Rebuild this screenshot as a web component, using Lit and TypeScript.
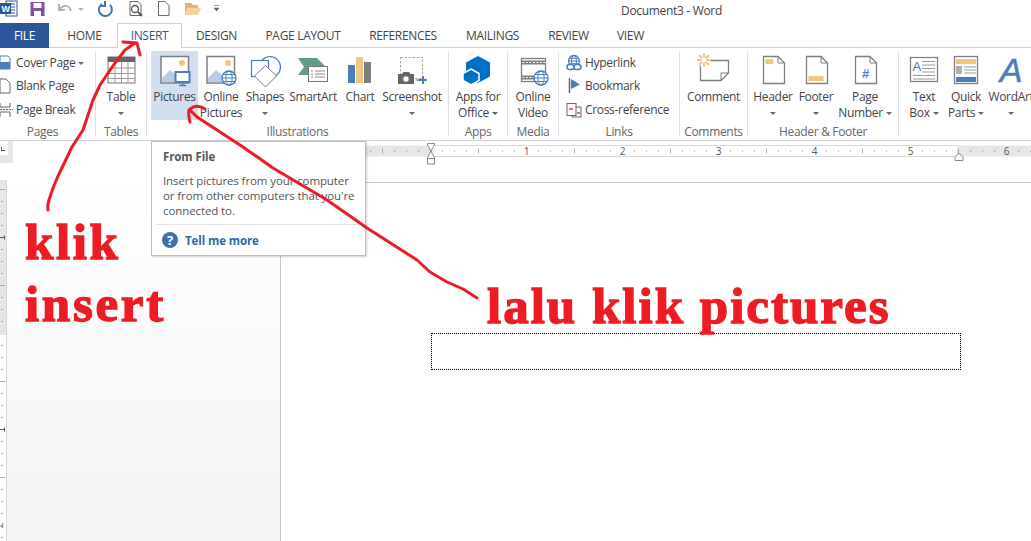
import { css, html, LitElement, svg } from "lit";
import { customElement } from "lit/decorators.js";

const BLUE = "#4a7ebb";
const YEL = "#edc87e";
const GR = "#7f7f7f";

const globe = (x: number, y: number, r: number) => svg`
  <circle cx=${x} cy=${y} r=${r} fill="#fff" stroke=${BLUE} stroke-width="1.3"/>
  <ellipse cx=${x} cy=${y} rx=${r * 0.45} ry=${r} fill="none" stroke=${BLUE}/>
  <path d="M${x - r} ${y}h${2 * r}M${x - r + 1} ${y - r / 2}h${2 * r - 2}M${x - r + 1} ${y + r / 2}h${2 * r - 2}" stroke=${BLUE}/>`;

const picFrame = svg`
  <rect x="6" y="3.5" width="27.5" height="26.5" fill="#fff" stroke=${GR} stroke-width="1.5"/>
  <circle cx="27" cy="10" r="3" fill=${YEL}/>
  <path d="M7 29V25L15 17L21 22L25 19L33 27V29Z" fill="#b9cde5"/>`;

const docPage = (inner: unknown) => svg`
  <path d="M10.5 3.5H25L31.5 10V30.5H10.5Z" fill="#fff" stroke=${GR} stroke-width="1.3"/>
  <path d="M25 3.5V10H31.5" fill="none" stroke=${GR}/>
  ${inner}`;

const icons: Record<string, unknown> = {
  table: svg`
    <rect x="7" y="4" width="27" height="26" fill="#fff" stroke="#777"/>
    <rect x="7" y="4" width="27" height="5" fill="#666"/>
    <path d="M7 15h27M7 20.500h27M7 25.500h27M14 9v21M20.500 9v21M27 9v21" stroke="#999" fill="none"/>`,
  pictures: svg`
    ${picFrame}
    <rect x="20.500" y="19" width="14" height="10" fill="#fff" stroke=${BLUE} stroke-width="2"/>
    <path d="M27.500 30v2M24 32.500h7" stroke=${BLUE} stroke-width="1.500"/>`,
  online: svg`${picFrame}${globe(28, 25, 7)}`,
  shapes: svg`
    <circle cx="25" cy="14" r="10.500" fill="#fff" stroke=${BLUE} stroke-width="1.200"/>
    <rect x="6.500" y="7.500" width="17" height="16" fill="#fff" stroke=${BLUE} stroke-width="1.200"/>
    <path d="M20.500 12.500L31.500 23L20.500 34L9.500 23Z" fill="#fff" stroke="#777" stroke-width="1"/>`,
  smartart: svg`
    <path d="M5 5H24L33 14L24 22H5L11 14Z" fill="#5f9e8f"/>
    <rect x="15.500" y="13.500" width="19" height="15" fill="#fff" stroke="#777"/>
    <path d="M18 18h2M22 18h10M18 21h2M22 21h10M18 24h2M22 24h10" stroke="#888"/>`,
  chart: svg`
    <rect x="8" y="12" width="7" height="18" fill=${BLUE}/>
    <rect x="16" y="4" width="7" height="26" fill=${YEL}/>
    <rect x="24" y="9" width="7" height="21" fill=${GR}/>`,
  screenshot: svg`
    <rect x="8.500" y="4.500" width="22" height="21" fill="none" stroke="#aaa" stroke-dasharray="2.500 1.500"/>
    <path d="M6 21H10L11.500 19H17L18.500 21H22V31H6Z" fill="#666"/>
    <circle cx="14" cy="26" r="3" fill="#fff" stroke="#999"/>
    <path d="M24.500 27h3" stroke=${BLUE} stroke-width="1.500"/>
    <path d="M27 27h8M31 23v8" stroke=${BLUE} stroke-width="2"/>`,
  apps: svg`
    <path d="M20 3L32 9.500V23.500L20 30L8 23.500V9.500Z" fill="#0070c8"/>
    <path d="M13 16L21 20.500V27.500L13 32L5 27.500V20.500Z" fill="#0070c8" stroke="#fff" stroke-width="1.500"/>`,
  video: svg`
    <rect x="8.500" y="5.500" width="24" height="23" fill="#fff" stroke=${GR} stroke-width="1.300"/>
    <path d="M8 9.500h25M8 24.500h25" stroke=${GR} stroke-width="4"/>
    <path d="M9.500 9.500h23M9.500 24.500h23" stroke="#fff" stroke-dasharray="2 1.500"/>
    ${globe(28, 25, 7)}`,
  comment: svg`
    <path d="M6.500 7.500H34.500V20L27 27.500H6.500Z" fill="#fff" stroke=${GR} stroke-width="1.300"/>
    <path d="M27 27.500V20H34.500" fill="none" stroke=${GR}/>
    <circle cx="10" cy="7" r="7" fill="#fff"/>
    <path d="M5 2L15 12M15 2L5 12M10 0V14M3 7H17" stroke=${YEL} stroke-width="2"/>
    <circle cx="10" cy="7" r="2.500" fill="#fff"/>`,
  header: docPage(svg`<rect x="12.500" y="6" width="8" height="5" fill=${YEL}/>`),
  footer: docPage(svg`<rect x="12.500" y="23" width="15" height="5" fill=${YEL}/>`),
  pagenum: docPage(svg`<text x="20.500" y="25" text-anchor="middle" font-family="Liberation Sans" font-weight="700" font-size="13" fill=${BLUE}>#</text>`),
  textbox: svg`
    <rect x="6.500" y="4.500" width="27" height="24" fill="#fff" stroke=${GR} stroke-width="1.200"/>
    <text x="8.500" y="18" font-family="Liberation Sans" font-size="13" fill=${BLUE}>A</text>
    <path d="M18 8.500h13M18 12h13M18 15.500h13M18 19h13M9 22.500h22M9 26h22" stroke="#999"/>`,
  quick: svg`
    <rect x="8.500" y="3.500" width="23" height="27" fill="#fff" stroke=${GR} stroke-width="1.300"/>
    <rect x="10" y="6" width="20" height="5" fill=${YEL}/>
    <rect x="10" y="13" width="6" height="8" fill="#b0b0b0"/>
    <path d="M18 14h12M18 17h12M18 20h12" stroke="#999"/>
    <rect x="10" y="24" width="20" height="5" fill=${BLUE}/>`,
  wordart: svg`<text x="20" y="29" text-anchor="middle" font-family="Liberation Sans" font-style="italic" font-size="34" stroke=${BLUE} stroke-width=".5" fill=${BLUE}>A</text>`,
  cover: svg`
    <path d="M3 1H11L13 3V14H3Z" fill="#fff" stroke=${BLUE}/>
    <rect x="3" y="7" width="10" height="7" fill=${BLUE}/>`,
  blank: svg`<path d="M3 1H9L13 5V15H3Z" fill="#fff" stroke="#666"/>`,
  pagebreak: svg`
    <path d="M3 1V5H13V1M3 15V10H13V15" fill="none" stroke="#666"/>
    <path d="M0 7.500h16" stroke="#666" stroke-dasharray="2 1"/>`,
  hyperlink: svg`
    ${globe(8, 6, 5.500)}
    <rect x="1" y="9.500" width="7" height="5" rx="2.500" fill="#fff" stroke=${BLUE} stroke-width="1.500"/>
    <rect x="8" y="9.500" width="7" height="5" rx="2.500" fill="#fff" stroke=${BLUE} stroke-width="1.500"/>`,
  bookmark: svg`
    <path d="M3.500 0V15" stroke="#666" stroke-width="1.500"/>
    <path d="M5 1L14 6.500L5 11Z" fill=${BLUE}/>`,
  crossref: svg`
    <rect x="1" y="1.500" width="9" height="12" fill="#fff" stroke="#666"/>
    <path d="M10 5H15V15H6V13.500" fill="none" stroke="#666"/>
    <path d="M3 7h4" stroke="#d24726" stroke-width="1.500"/>
    <path d="M11 11h3" stroke="#d24726" stroke-width="1.500"/>`,
};

interface Big {
  icon: string;
  lines: string[];
  w: number;
  caret?: boolean;
  on?: boolean;
}
interface Small {
  icon: string;
  text: string;
  caret?: boolean;
}
interface Group {
  label: string;
  w: number;
  cls?: string;
  big?: Big[];
  small?: Small[];
}

const groups: Group[] = [
  {
    label: "Pages",
    w: 106,
    cls: "pages",
    small: [
      { icon: "cover", text: "Cover Page", caret: true },
      { icon: "blank", text: "Blank Page" },
      { icon: "pagebreak", text: "Page Break" },
    ],
  },
  { label: "Tables", w: 51, big: [{ icon: "table", lines: ["Table", ""], w: 50, caret: true }] },
  {
    label: "Illustrations",
    w: 302,
    cls: "illus",
    big: [
      { icon: "pictures", lines: ["Pictures"], w: 47, on: true },
      { icon: "online", lines: ["Online", "Pictures"], w: 46 },
      { icon: "shapes", lines: ["Shapes", ""], w: 42, caret: true },
      { icon: "smartart", lines: ["SmartArt"], w: 54 },
      { icon: "chart", lines: ["Chart"], w: 40 },
      { icon: "screenshot", lines: ["Screenshot", ""], w: 64, caret: true },
    ],
  },
  { label: "Apps", w: 59, big: [{ icon: "apps", lines: ["Apps for", "Office"], w: 58, caret: true }] },
  { label: "Media", w: 51, big: [{ icon: "video", lines: ["Online", "Video"], w: 50 }] },
  {
    label: "Links",
    w: 121,
    small: [
      { icon: "hyperlink", text: "Hyperlink" },
      { icon: "bookmark", text: "Bookmark" },
      { icon: "crossref", text: "Cross-reference" },
    ],
  },
  { label: "Comments", w: 68, big: [{ icon: "comment", lines: ["Comment"], w: 67 }] },
  {
    label: "Header & Footer",
    w: 151,
    big: [
      { icon: "header", lines: ["Header", ""], w: 50, caret: true },
      { icon: "footer", lines: ["Footer", ""], w: 36, caret: true },
      { icon: "pagenum", lines: ["Page", "Number"], w: 62, caret: true },
    ],
  },
  {
    label: "",
    w: 140,
    cls: "last",
    big: [
      { icon: "textbox", lines: ["Text", "Box"], w: 50, caret: true },
      { icon: "quick", lines: ["Quick", "Parts"], w: 34, caret: true },
      { icon: "wordart", lines: ["WordArt", ""], w: 56, caret: true },
    ],
  },
];

const tabs = [
  { t: "HOME", w: 65 },
  { t: "INSERT", w: 65, on: true },
  { t: "DESIGN", w: 69 },
  { t: "PAGE LAYOUT", w: 104 },
  { t: "REFERENCES", w: 96 },
  { t: "MAILINGS", w: 83 },
  { t: "REVIEW", w: 69 },
  { t: "VIEW", w: 55 },
];

@customElement("app-root")
export class AppRoot extends LitElement {
  static styles = css`
    :host {
      display: block;
      position: relative;
      width: 1031px;
      height: 541px;
      overflow: hidden;
      background: #fff;
      color: #444;
      font: 12px/16px "Open Sans", "Liberation Sans", sans-serif;
      letter-spacing: -0.32px;
    }
    svg {
      display: block;
    }

    .qat {
      display: flex;
      height: 23px;
      position: relative;
    }
    .qat svg {
      flex: none;
    }
    .title {
      position: absolute;
      left: 621px;
      top: 3px;
    }

    .tabs {
      display: flex;
      height: 25px;
      position: relative;
      z-index: 1;
    }
    .file {
      width: 49px;
      background: #2b579a;
      color: #fff;
      text-align: center;
      line-height: 26px;
      margin-right: 3px;
    }
    .tab {
      text-align: center;
      line-height: 25px;
      box-sizing: border-box;
    }
    .tab.on {
      color: #2b579a;
      background: #fff;
      border: 1px solid #d4d4d4;
      border-bottom: 0;
      line-height: 24px;
    }

    .ribbon {
      display: flex;
      height: 94px;
      box-sizing: border-box;
      margin-top: -1px;
      padding-top: 4px;
      border-top: 1px solid #d4d4d4;
      border-bottom: 1px solid #d4d4d4;
      overflow: hidden;
    }
    .group {
      flex: none;
      box-sizing: border-box;
      height: 84px;
      border-right: 1px solid #e1e1e1;
    }
    .group.pages {
      margin-left: -10px;
    }
    .group.last {
      border-right: 0;
    }
    .body {
      display: flex;
      height: 74px;
    }
    .illus .body {
      padding-left: 4px;
    }
    .glabel {
      height: 10px;
      line-height: 12px;
      text-align: center;
      color: #666;
    }
    .big {
      flex: none;
      box-sizing: border-box;
      height: 69px;
      margin-top: -1px;
      padding-top: 2px;
      display: flex;
      flex-direction: column;
      align-items: center;
      white-space: nowrap;
    }
    .big.on {
      background: #d2dff0;
    }
    .big svg {
      margin-bottom: 2px;
    }
    .line {
      height: 16px;
    }
    .caret {
      display: inline-block;
      border: 3px solid transparent;
      border-top: 3px solid #666;
      border-bottom: 0;
      margin-left: 3px;
      vertical-align: 2px;
    }
    .line.empty .caret {
      margin-left: 0;
    }
    .smalls {
      margin-top: -1px;
      padding-left: 7px;
    }
    .small {
      display: flex;
      align-items: center;
      height: 23.5px;
      gap: 3px;
      white-space: nowrap;
    }

    .rulerrow {
      display: flex;
      justify-content: space-between;
      height: 39px;
    }
    .corner {
      width: 13px;
      height: 22px;
      background: #e6e6e6;
    }
    .corner i {
      display: block;
      width: 8px;
      height: 14px;
      background: #fff;
      position: relative;
    }
    .corner i::after {
      content: "";
      position: absolute;
      left: 1px;
      top: 6px;
      width: 3px;
      height: 3px;
      border-left: 1px solid #555;
      border-bottom: 1px solid #555;
    }

    .main {
      display: flex;
      height: 361px;
    }
    .vruler {
      flex: none;
      width: 6px;
      border-right: 1px solid #d8d8d8;
    }
    .nav {
      flex: none;
      box-sizing: border-box;
      width: 274px;
      background: linear-gradient(#fff, #f3f3f3);
      border-right: 1px solid #c6c6c6;
    }
    .doc {
      flex: 1;
      margin-top: 2px;
      border-top: 1px solid #c6c6c6;
    }
    .hdr {
      width: 530px;
      height: 37px;
      box-sizing: border-box;
      margin: 150px 0 0 150px;
      border: 1px dotted #000;
    }

    .tip {
      position: absolute;
      left: 151px;
      top: 141px;
      width: 215px;
      height: 115px;
      box-sizing: border-box;
      padding: 7px 5px 0 11px;
      background: #fff;
      border: 1px solid #bdbdbd;
      box-shadow: 1px 1px 2px rgba(0, 0, 0, 0.18);
      color: #555;
      font-size: 11.5px;
      line-height: 15px;
      letter-spacing: -0.1px;
    }
    .tip b {
      display: block;
      font-size: 11.5px;
      line-height: 16px;
      color: #555;
      margin-bottom: 8px;
    }
    .tip .more {
      display: flex;
      align-items: center;
      gap: 7px;
      margin: 6px 0 0 -7px;
      padding: 7px 0 0 6px;
      border-top: 1px solid #e2e2e2;
      color: #2b6aa6;
      font-weight: 700;
    }
    .q {
      width: 16px;
      height: 16px;
      border-radius: 50%;
      background: #3f72ac;
      color: #fff;
      font-size: 13px;
      line-height: 16px;
      text-align: center;
    }

    .ink {
      position: absolute;
      left: 0;
      top: 0;
      z-index: 2;
      pointer-events: none;
    }
    .note {
      position: absolute;
      z-index: 2;
      color: #ed1c24;
      font: 700 51px/60px "Liberation Serif", serif;
      -webkit-text-stroke: 1.4px #ed1c24;
      letter-spacing: 2px;
      white-space: nowrap;
    }
    .klik {
      left: 25px;
      top: 212px;
      letter-spacing: 2.6px;
    }
    .insert {
      left: 25px;
      top: 274px;
      letter-spacing: 2.7px;
    }
    .lalu {
      left: 487px;
      top: 276px;
    }
  `;

  private renderBig(b: Big) {
    const last = b.lines.length - 1;
    return html`<div class="big ${b.on ? "on" : ""}" style="width:${b.w}px">
      <svg width="40" height="34" viewBox="0 0 40 34" style="overflow:visible">${icons[b.icon]}</svg>
      ${b.lines.map(
        (l, i) => html`<div class="line ${l ? "" : "empty"}">${l}${b.caret && i === last ? html`<span class="caret"></span>` : ""}</div>`
      )}
    </div>`;
  }

  private renderGroup(g: Group) {
    return html`<div class="group ${g.cls ?? ""}" style="width:${g.w}px">
      <div class="body">
        ${g.big
          ? g.big.map((b) => this.renderBig(b))
          : html`<div class="smalls">
              ${g.small!.map(
                (s) => html`<div class="small">
                  <svg width="16" height="16" viewBox="0 0 16 16">${icons[s.icon]}</svg>
                  <span>${s.text}${s.caret ? html`<span class="caret"></span>` : ""}</span>
                </div>`
              )}
            </div>`}
      </div>
      <div class="glabel">${g.label}</div>
    </div>`;
  }

  private renderHRuler() {
    // x here is screen x minus 365, origin of the scale is at 65.5
    const marks = [];
    for (let n = -5; n <= 50; n++) {
      const x = 65.5 + n * 12;
      if (n === 0 || x > 666) continue;
      if (n % 8 === 0) {
        marks.push(
          svg`<text x=${x} y="14" text-anchor="middle" font-size="10" fill="#555" font-family="Open Sans">${n / 8}</text>`
        );
      } else if (n % 4 === 0) {
        marks.push(svg`<path d="M${x} 7.500v5" stroke="#aaa"/>`);
      } else {
        marks.push(svg`<path d="M${x} 9.500v1.500" stroke="#aaa"/>`);
      }
    }
    return html`<svg width="666" height="26" viewBox="0 0 666 26">
      <rect x="0" y="4.500" width="66" height="11" fill="#e6e6e6"/>
      <rect x="592" y="4.500" width="74" height="11" fill="#e6e6e6"/>
      <path d="M66 4.500H592M66 15.500H592" stroke="#d8d8d8"/>
      ${marks}
      <path d="M62.500 2.500H69.500V4L66 10L69.500 16.500V17.500H62.500V16.500L66 10L62.500 4Z" fill="#fff" stroke="#8a8a8a"/>
      <rect x="62.500" y="17.500" width="7" height="5.500" fill="#fff" stroke="#8a8a8a"/>
      <path d="M594 12L598 16.500V19.500H590V16.500Z" fill="#fff" stroke="#8a8a8a"/>
    </svg>`;
  }

  private renderVRuler() {
    // y here is screen y minus 180, zero of the scale is at 153
    const marks = [];
    for (let n = -12; n <= 31; n++) {
      const y = 153.5 + n * 12;
      if (n === 0) continue;
      if (n % 8 === 0) {
        if (n === 16) {
          marks.push(
            svg`<text transform="translate(3 ${y}) rotate(-90)" text-anchor="middle" font-size="10" fill="#555" font-family="Open Sans">2</text>`
          );
        } else {
          marks.push(svg`<path d="M0 ${y}h5M4.500 ${y - 2}v4" stroke="#555"/>`);
        }
      } else if (n % 4 === 0) {
        marks.push(svg`<path d="M0 ${y}h5" stroke="#aaa"/>`);
      } else {
        marks.push(svg`<path d="M1 ${y}h2" stroke="#aaa"/>`);
      }
    }
    return html`<svg width="6" height="361" viewBox="0 0 6 361">
      <rect width="6" height="155" fill="#e6e6e6"/>
      ${marks}
    </svg>`;
  }

  render() {
    return html`
      <div class="qat">
        <svg width="231" height="23" viewBox="0 0 231 23">
          <rect x="6" y="1" width="11" height="15" fill="#fff" stroke="#2b579a"/>
          <path d="M11 4h4M11 7h4M11 10h4M11 13h4" stroke="#2b579a"/>
          <rect x="0" y="3" width="11" height="11" fill="#2b579a"/>
          <text x="5.500" y="12" text-anchor="middle" fill="#fff" font-size="9" font-weight="700" font-family="Liberation Sans">W</text>
          <rect x="30.500" y="2" width="14" height="14" fill="#7f4fa0"/>
          <rect x="33.500" y="3" width="8" height="5" fill="#fff"/>
          <rect x="34" y="11" width="7" height="5" fill="#fff"/>
          <path d="M60 9C64 4 69 5 71 11M59 4V10H65" fill="none" stroke="#b3b3b3" stroke-width="2"/>
          <path d="M78 8h6l-3 3Z" fill="#b3b3b3"/>
          <path d="M102 4A6.500 6.500 0 1 0 110 5M105 1V6H100" fill="none" stroke="#3f78b5" stroke-width="2"/>
          <path d="M130 1.500H138L141 4.500V15.500H130Z" fill="#fff" stroke="#666"/>
          <circle cx="135" cy="9" r="3.500" fill="#fff" stroke="#555" stroke-width="1.300"/>
          <path d="M138 12L142 16" stroke="#555" stroke-width="1.800"/>
          <path d="M158.500 1.500H165L169 5.500V15.500H158.500Z" fill="#fff" stroke="#666"/>
          <path d="M185 3H191L193 5H198V15H185Z" fill="#e3b768"/>
          <path d="M187 8H201L198 15H185Z" fill="#f2d59b"/>
          <path d="M214 5.500h5M214 8h5l-2.500 3Z" fill="#666" stroke="#666" stroke-width=".6"/>
        </svg>
        <div class="title">Document3 - Word</div>
      </div>
      <div class="tabs">
        <div class="file">FILE</div>
        ${tabs.map((t) => html`<div class="tab ${t.on ? "on" : ""}" style="width:${t.w}px">${t.t}</div>`)}
      </div>
      <div class="ribbon">${groups.map((g) => this.renderGroup(g))}</div>
      <div class="rulerrow">
        <div class="corner"><i></i></div>
        ${this.renderHRuler()}
      </div>
      <div class="main">
        <div class="vruler">${this.renderVRuler()}</div>
        <div class="nav"></div>
        <div class="doc"><div class="hdr"></div></div>
      </div>
      <div class="tip">
        <b>From File</b>
        Insert pictures from your computer<br />
        or from other computers that you're<br />
        connected to.
        <div class="more"><span class="q">?</span>Tell me more</div>
      </div>
      <div class="note klik">klik</div>
      <div class="note insert">insert</div>
      <div class="note lalu">lalu klik pictures</div>
      <svg class="ink" width="1031" height="541" viewBox="0 0 1031 541" fill="none" stroke="#ed1c24" stroke-width="3" stroke-linecap="round" stroke-linejoin="round">
        <path d="M48 210C47 204 49 200 50 197C52 190 55 183 58 176L72 147L83 130L93 100L100 85L115 63L125 50L135 43"/>
        <path d="M123 42L137 43L140 55"/>
        <path d="M477 298L463 289L447 282L430 272L417 260L367 228L327 200L273 168L243 147L217 130L197 117L190 110"/>
        <path d="M205 109C199 105 194 105 189 110C188 114 189 118 190 122"/>
      </svg>
    `;
  }
}
